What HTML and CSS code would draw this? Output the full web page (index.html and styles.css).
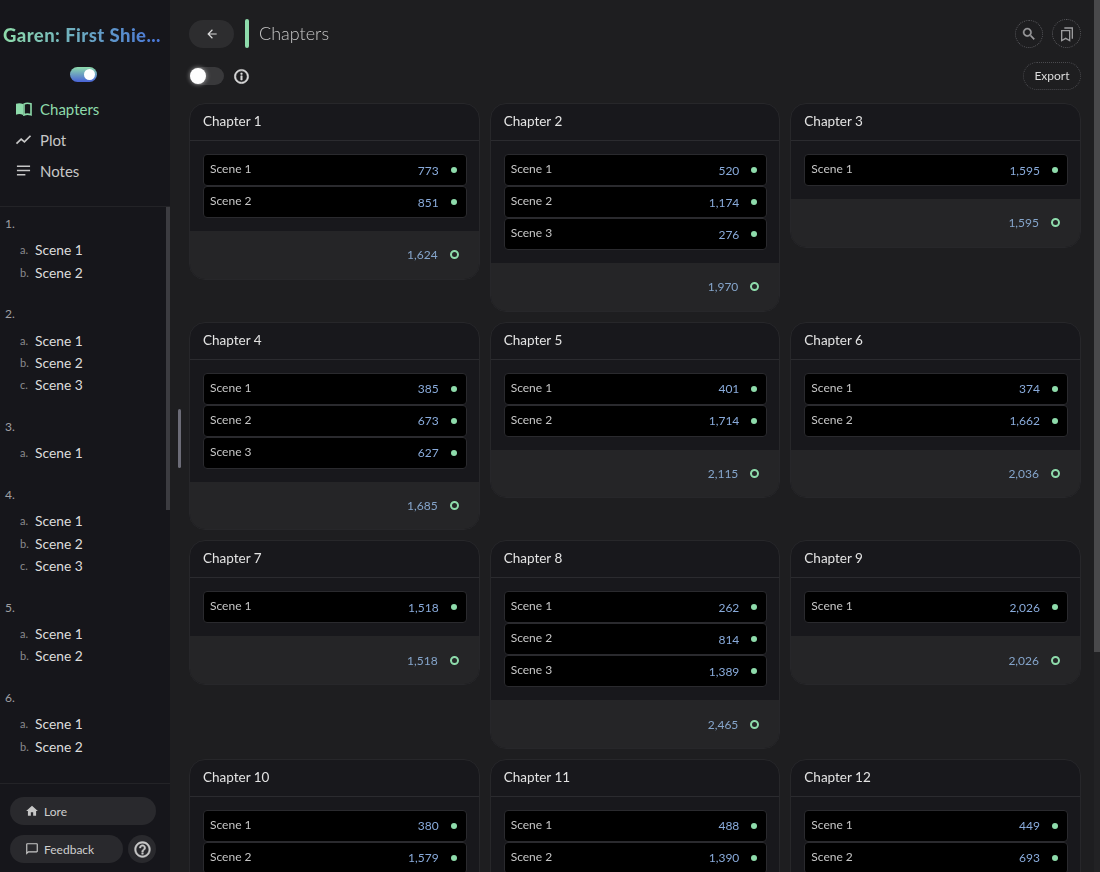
FILE: index.html
```html
<!DOCTYPE html>
<html lang="en">
<head>
<meta charset="utf-8">
<title>Chapters</title>
<link rel="stylesheet" href="styles.css">
</head>
<body>
<div class="app">
  <aside class="sidebar">
    <div class="side-top">
      <h1 class="book-title">Garen: First Shie...</h1>
      <div class="side-toggle-row"><span class="side-toggle"><span class="side-knob"></span></span></div>
      <nav class="nav">
        <a class="nav-item active"><svg class="nav-icon" viewBox="0 0 18 16"><path d="M1 3c2.500-1 5-1 7.500.3v11.700c-2.500-1.300-5-1.300-7.500-.3z" fill="currentColor"/><path d="M9.500 3.300c2.300-1.300 4.500-1.300 7.500-.3v11.700c-3-1-5.200-1-7.500.3z" fill="none" stroke="currentColor" stroke-width="1.700"/></svg>Chapters</a>
        <a class="nav-item"><svg class="nav-icon" viewBox="0 0 18 16"><path d="M1.500 12.500l5-5 3.500 3 6.500-6.500" fill="none" stroke="currentColor" stroke-width="1.800"/></svg>Plot</a>
        <a class="nav-item"><svg class="nav-icon" viewBox="0 0 18 16"><path d="M2 3.500h14M2 8h14M2 12.500h9" fill="none" stroke="currentColor" stroke-width="1.700"/></svg>Notes</a>
      </nav>
    </div>
    <div class="outline">
      <div class="group"><div class="num">1.</div><div class="scene"><i>a.</i>Scene 1</div><div class="scene"><i>b.</i>Scene 2</div></div>
      <div class="group"><div class="num">2.</div><div class="scene"><i>a.</i>Scene 1</div><div class="scene"><i>b.</i>Scene 2</div><div class="scene"><i>c.</i>Scene 3</div></div>
      <div class="group"><div class="num">3.</div><div class="scene"><i>a.</i>Scene 1</div></div>
      <div class="group"><div class="num">4.</div><div class="scene"><i>a.</i>Scene 1</div><div class="scene"><i>b.</i>Scene 2</div><div class="scene"><i>c.</i>Scene 3</div></div>
      <div class="group"><div class="num">5.</div><div class="scene"><i>a.</i>Scene 1</div><div class="scene"><i>b.</i>Scene 2</div></div>
      <div class="group"><div class="num">6.</div><div class="scene"><i>a.</i>Scene 1</div><div class="scene"><i>b.</i>Scene 2</div></div>
      <span class="outline-thumb"></span>
    </div>
    <div class="side-foot">
      <a class="pill wide"><svg class="pill-icon" viewBox="0 0 24 24"><path d="M10 20v-6h4v6h5v-8h3L12 3 2 12h3v8z" fill="currentColor"/></svg>Lore</a>
      <div class="foot-row">
        <a class="pill grow"><svg class="pill-icon" viewBox="0 0 24 24"><path d="M20 2H4c-1.100 0-2 .9-2 2v18l4-4h14c1.100 0 2-.9 2-2V4c0-1.100-.9-2-2-2zm0 14H5.200L4 17.200V4h16v12z" fill="currentColor"/></svg>Feedback</a>
        <a class="help"><svg class="help-icon" viewBox="0 0 24 24"><path d="M11 18h2v-2h-2v2zm1-16C6.480 2 2 6.480 2 12s4.480 10 10 10 10-4.480 10-10S17.520 2 12 2zm0 18c-4.410 0-8-3.590-8-8s3.590-8 8-8 8 3.590 8 8-3.590 8-8 8zm0-14c-2.210 0-4 1.790-4 4h2c0-1.100.9-2 2-2s2 .9 2 2c0 2-3 1.750-3 5h2c0-2.250 3-2.500 3-5 0-2.210-1.790-4-4-4z" fill="currentColor"/></svg></a>
      </div>
    </div>
  </aside>
  <div class="resizer"><span class="resizer-bar"></span></div>
  <main class="main">
    <header class="topbar">
      <a class="back"><svg class="back-icon" viewBox="0 0 24 24"><path d="M20 11H7.830l5.590-5.590L12 4l-8 8 8 8 1.410-1.410L7.830 13H20v-2z" fill="currentColor"/></svg></a>
      <span class="accent"></span>
      <h2 class="page-title">Chapters</h2>
      <div class="top-actions">
        <a class="round small"><svg class="round-icon" viewBox="0 0 24 24"><path d="M15.500 14h-.79l-.28-.27C15.410 12.590 16 11.110 16 9.500 16 5.910 13.090 3 9.500 3S3 5.910 3 9.500 5.910 16 9.500 16c1.610 0 3.090-.59 4.230-1.570l.27.28v.79l5 4.990L20.490 19l-4.990-5zm-6 0C7.010 14 5 11.990 5 9.500S7.010 5 9.500 5 14 7.010 14 9.500 11.990 14 9.500 14z" fill="currentColor" stroke="currentColor" stroke-width=".6"/></svg></a>
        <a class="round"><svg class="round-icon" viewBox="0 0 24 24"><path d="M8 3h12v16" fill="none" stroke="currentColor" stroke-width="2"/><path d="M4 7h12v15l-6-3.500L4 22z" fill="none" stroke="currentColor" stroke-width="2"/></svg></a>
      </div>
    </header>
    <div class="toolbar">
      <span class="switch"><span class="switch-knob"></span></span>
      <svg class="info" viewBox="0 0 24 24"><path d="M11 7h2v2h-2zm0 4h2v6h-2zm1-9C6.480 2 2 6.480 2 12s4.480 10 10 10 10-4.480 10-10S17.520 2 12 2zm0 18c-4.410 0-8-3.590-8-8s3.590-8 8-8 8 3.590 8 8-3.590 8-8 8z" fill="currentColor"/></svg>
      <a class="export">Export</a>
    </div>
    <section class="grid">
      <article class="card"><div class="card-head">Chapter 1</div><div class="card-body"><div class="row"><span>Scene 1</span><b>773</b><u></u></div><div class="row"><span>Scene 2</span><b>851</b><u></u></div></div><div class="card-foot"><b>1,624</b><u></u></div></article>
      <article class="card"><div class="card-head">Chapter 2</div><div class="card-body"><div class="row"><span>Scene 1</span><b>520</b><u></u></div><div class="row"><span>Scene 2</span><b>1,174</b><u></u></div><div class="row"><span>Scene 3</span><b>276</b><u></u></div></div><div class="card-foot"><b>1,970</b><u></u></div></article>
      <article class="card"><div class="card-head">Chapter 3</div><div class="card-body"><div class="row"><span>Scene 1</span><b>1,595</b><u></u></div></div><div class="card-foot"><b>1,595</b><u></u></div></article>
      <article class="card"><div class="card-head">Chapter 4</div><div class="card-body"><div class="row"><span>Scene 1</span><b>385</b><u></u></div><div class="row"><span>Scene 2</span><b>673</b><u></u></div><div class="row"><span>Scene 3</span><b>627</b><u></u></div></div><div class="card-foot"><b>1,685</b><u></u></div></article>
      <article class="card"><div class="card-head">Chapter 5</div><div class="card-body"><div class="row"><span>Scene 1</span><b>401</b><u></u></div><div class="row"><span>Scene 2</span><b>1,714</b><u></u></div></div><div class="card-foot"><b>2,115</b><u></u></div></article>
      <article class="card"><div class="card-head">Chapter 6</div><div class="card-body"><div class="row"><span>Scene 1</span><b>374</b><u></u></div><div class="row"><span>Scene 2</span><b>1,662</b><u></u></div></div><div class="card-foot"><b>2,036</b><u></u></div></article>
      <article class="card"><div class="card-head">Chapter 7</div><div class="card-body"><div class="row"><span>Scene 1</span><b>1,518</b><u></u></div></div><div class="card-foot"><b>1,518</b><u></u></div></article>
      <article class="card"><div class="card-head">Chapter 8</div><div class="card-body"><div class="row"><span>Scene 1</span><b>262</b><u></u></div><div class="row"><span>Scene 2</span><b>814</b><u></u></div><div class="row"><span>Scene 3</span><b>1,389</b><u></u></div></div><div class="card-foot"><b>2,465</b><u></u></div></article>
      <article class="card"><div class="card-head">Chapter 9</div><div class="card-body"><div class="row"><span>Scene 1</span><b>2,026</b><u></u></div></div><div class="card-foot"><b>2,026</b><u></u></div></article>
      <article class="card"><div class="card-head">Chapter 10</div><div class="card-body"><div class="row"><span>Scene 1</span><b>380</b><u></u></div><div class="row"><span>Scene 2</span><b>1,579</b><u></u></div></div></article>
      <article class="card"><div class="card-head">Chapter 11</div><div class="card-body"><div class="row"><span>Scene 1</span><b>488</b><u></u></div><div class="row"><span>Scene 2</span><b>1,390</b><u></u></div></div></article>
      <article class="card"><div class="card-head">Chapter 12</div><div class="card-body"><div class="row"><span>Scene 1</span><b>449</b><u></u></div><div class="row"><span>Scene 2</span><b>693</b><u></u></div></div></article>
    </section>
  </main>
  <div class="page-scroll"><span class="page-thumb"></span></div>
</div>
</body>
</html>
```
FILE: styles.css
```css
* { box-sizing: border-box; }
html, body { margin: 0; height: 100%; overflow: hidden; }
body { background: #1e1e20; color: #e6e6e6; font-family: "Lato", "Noto Sans", sans-serif; }
a { display: flex; align-items: center; }
.app { display: flex; height: 872px; overflow: hidden; opacity: .999; }

.sidebar { width: 170px; flex: none; display: flex; flex-direction: column; background: #17171c; }
.side-top { height: 207px; flex: none; border-bottom: 1px solid #242428; }
.book-title { margin: 0; padding: 24px 0 0 3px; height: 58px; font-size: 18.500px; line-height: 22px; font-weight: 900; letter-spacing: .42px; white-space: nowrap; background: linear-gradient(90deg, #8fdcac 3%, #4a78d8 92%); -webkit-background-clip: text; background-clip: text; color: transparent; }
.side-toggle-row { padding-left: 70px; height: 24px; padding-top: 9px; }
.side-toggle { display: block; width: 27px; height: 15px; border-radius: 8px; background: linear-gradient(180deg, #8fdcac, #4a63d8); position: relative; }
.side-knob { position: absolute; right: 2px; top: 2px; width: 11px; height: 11px; border-radius: 50%; background: #fff; }
.nav { display: flex; flex-direction: column; padding-top: 11px; }
.nav-item { height: 31px; padding-left: 15px; font-size: 15px; color: #c8c8c8; gap: 8px; }
.nav-item.active { color: #8fdcac; }
.nav-icon { width: 17px; height: 15px; flex: none; }

.outline { flex: 1; min-height: 0; overflow: hidden; padding: 8px 0 0 5px; position: relative; border-bottom: 1px solid #242428; }
.group { margin-bottom: 22.100px; }
.num { font-size: 12px; line-height: 18px; height: 23.500px; color: #a0a0a4; }
.scene { display: flex; align-items: center; height: 22.400px; padding-left: 15px; font-size: 13.800px; color: #dedede; }
.scene i { font-style: normal; font-size: 11px; color: #8c8c90; width: 15px; }
.outline-thumb { position: absolute; right: 0; top: 0; width: 4px; height: 303px; background: #3d3d42; }

.side-foot { height: 88px; flex: none; padding: 13px 14px 0 10px; display: flex; flex-direction: column; gap: 10px; }
.pill { height: 28px; border-radius: 14px; background: #2a2a2e; font-size: 12px; color: #d0d0d0; padding-left: 15px; gap: 5px; }
.pill-icon { width: 14px; height: 14px; flex: none; color: #c8c8c8; }
.foot-row { display: flex; gap: 5px; }
.grow { flex: 1; }
.help { width: 28px; height: 28px; border-radius: 50%; background: #2a2a2e; justify-content: center; color: #c8c8c8; flex: none; }
.help-icon { width: 19px; height: 19px; stroke: currentColor; stroke-width: .6; }

.resizer { width: 19px; flex: none; display: flex; align-items: flex-start; padding: 409px 0 0 8px; }
.resizer-bar { display: block; width: 3px; height: 59px; background: #6d6d78; border-radius: 2px; }

.main { flex: 1; min-width: 0; padding-right: 13px; }
.topbar { display: flex; align-items: center; height: 48px; padding-top: 19px; margin-bottom: 14px; }
.back { width: 45px; height: 28px; border-radius: 14px; background: #2e2e30; justify-content: center; color: #dcdcdc; }
.back-icon { width: 14px; height: 14px; }
.accent { width: 4px; height: 29px; margin-left: 11px; border-radius: 2px; background: #8fdcac; }
.page-title { margin: -2px 0 0 10px; font-size: 18px; font-weight: 300; color: #c8c8c8; }
.top-actions { margin-left: auto; display: flex; align-items: center; gap: 9px; }
.round { width: 29px; height: 29px; border-radius: 50%; border: 1px dotted #5a5a5e; justify-content: center; color: #9c9c9e; }
.small { width: 28px; height: 28px; }
.round-icon { width: 16px; height: 16px; }
.toolbar { display: flex; align-items: center; height: 28px; margin-bottom: 0; }
.switch { display: block; width: 34px; height: 18px; border-radius: 9px; background: #3a3a3c; margin-left: 1px; position: relative; }
.switch-knob { position: absolute; left: 0; top: 1px; width: 16px; height: 16px; border-radius: 50%; background: #fff; box-shadow: 0 0 5px rgba(255,255,255,.6); }
.info { width: 17px; height: 17px; margin-left: 9px; color: #dcdcdc; stroke: currentColor; stroke-width: .8; }
.export { margin-left: auto; width: 58px; height: 28px; justify-content: center; border: 1px dotted #4c4c50; border-radius: 14px; font-size: 12px; color: #dcdcdc; padding-bottom: 2px; }

.grid { display: grid; grid-template-columns: repeat(3, 1fr); gap: 10px; align-items: start; margin-top: 13px; }
.card { border: 1px solid #28282b; border-radius: 16px; overflow: hidden; background: #19191d; }
.card-head { height: 37px; padding: 0 13px 2px; display: flex; align-items: center; border-bottom: 1px solid #2c2c30; font-size: 13.500px; color: #e4e4e4; }
.card-body { padding: 13px 12px 13px 13px; }
.row { display: flex; align-items: center; height: 32px; background: #000; border: 1px solid #2b2b2f; border-radius: 4px; padding: 0 9px 0 6px; font-size: 12px; color: #c8c8c8; }
.row span { flex: 1; padding-bottom: 3px; }
.row b, .card-foot b { font-weight: 400; color: #8aacdc; font-size: 12px; }
.row u { width: 6px; height: 6px; margin-left: 12px; border-radius: 50%; background: #8fdcac; flex: none; }
.card-foot { height: 47.670px; background: #262628; display: flex; justify-content: flex-end; align-items: center; padding-right: 20px; }
.card-foot b { color: #86a6cc; }
.card-foot u { width: 9px; height: 9px; margin-left: 12px; border-radius: 50%; border: 2px solid #8fdcac; flex: none; }

.page-scroll { width: 6px; flex: none; background: #232325; }
.page-thumb { display: block; height: 652px; background: #4a4a4c; }
```
